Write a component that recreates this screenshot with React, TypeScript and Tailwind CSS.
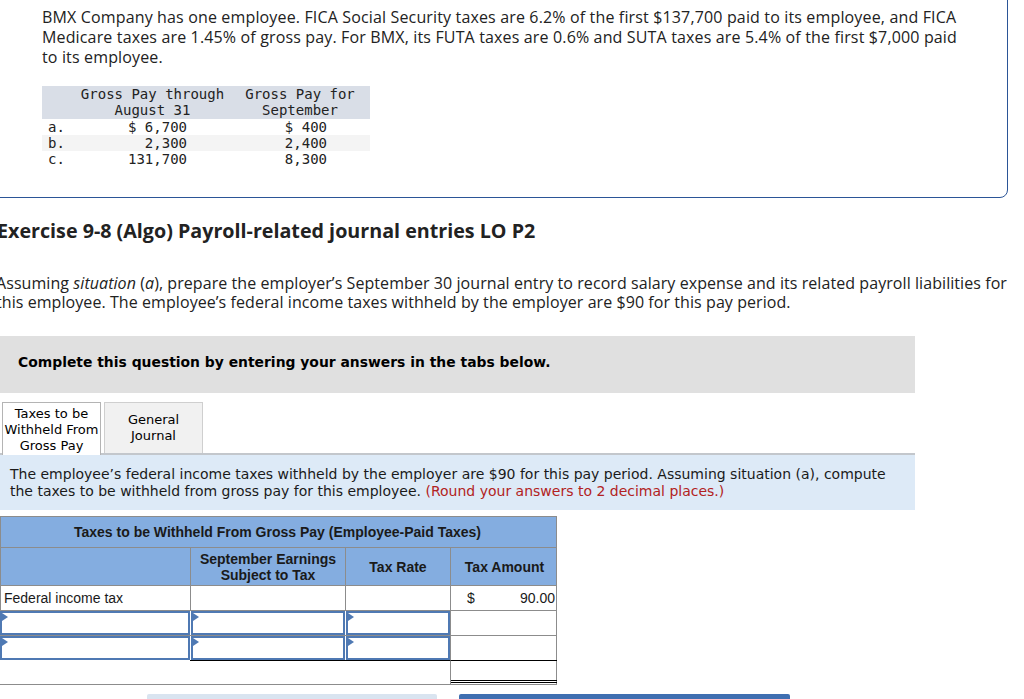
const situations = [
  { label: 'a.', through: '$ 6,700', sept: '$ 400', shaded: false },
  { label: 'b.', through: '2,300', sept: '2,400', shaded: true },
  { label: 'c.', through: '131,700', sept: '8,300', shaded: false },
]

function InputCell({ className = '' }: { className?: string }) {
  return (
    <div className={`relative h-full border-2 border-[#4f79b3] bg-white ${className}`}>
      <div className="absolute left-0 top-0 h-0 w-0 border-y-[4px] border-l-[6px] border-y-transparent border-l-[#4f79b3]" />
    </div>
  )
}

export default function App() {
  return (
    <div className="relative h-[699px] w-[1024px] overflow-hidden bg-white text-[#1a1a1a]">
      {/* question card */}
      <div className="-ml-[10px] -mt-[10px] h-[208px] w-[1018px] rounded-br-[8px] border-[1.5px] border-[#2b5597] pl-[51px] pt-[16px]">
        <p className="font-['Open_Sans',sans-serif] text-[16px] leading-[20px] tracking-[0.15px] text-[#222]">
          <span className="block whitespace-nowrap">
            BMX Company has one employee. FICA Social Security taxes are 6.2% of the first $137,700 paid to its
            employee, and FICA
          </span>
          <span className="block whitespace-nowrap">
            Medicare taxes are 1.45% of gross pay. For BMX, its FUTA taxes are 0.6% and SUTA taxes are 5.4% of the
            first $7,000 paid
          </span>
          <span className="block whitespace-nowrap">to its employee.</span>
        </p>
        <div className="mt-[19px] w-[328px] font-['DejaVu_Sans_Mono',monospace] text-[14px] leading-[16px] text-[#222]">
          <div className="grid grid-cols-[33px_155px_140px] bg-[#d9dee7] pb-[1px]">
            <div />
            <div className="text-center">
              Gross Pay through
              <br />
              August 31
            </div>
            <div className="text-center">
              Gross Pay for
              <br />
              September
            </div>
          </div>
          {situations.map((s) => (
            <div
              key={s.label}
              className={`grid grid-cols-[33px_155px_140px] ${s.shaded ? 'bg-[#f4f4f4]' : ''}`}
            >
              <div className="pl-[6px]">{s.label}</div>
              <div className="pr-[43px] text-right">{s.through}</div>
              <div className="pr-[43px] text-right">{s.sept}</div>
            </div>
          ))}
        </div>
      </div>

      {/* exercise heading */}
      <h1 className="-ml-[3px] mt-[21px] whitespace-nowrap font-['Open_Sans',sans-serif] text-[19.7px] font-bold leading-[24px] text-[#222]">
        Exercise 9-8 (Algo) Payroll-related journal entries LO P2
      </h1>

      <p className="-ml-[4px] mt-[31px] font-['Open_Sans',sans-serif] text-[16px] leading-[19px] tracking-[0.07px] text-[#222]">
        <span className="block whitespace-nowrap">
          Assuming <i>situation</i> (<i>a</i>), prepare the employer’s September 30 journal entry to record salary
          expense and its related payroll liabilities for
        </span>
        <span className="block whitespace-nowrap">
          this employee. The employee’s federal income taxes withheld by the employer are $90 for this pay period.
        </span>
      </p>

      {/* instruction bar */}
      <div className="mt-[24px] flex h-[57px] w-[915px] items-center bg-[#e0e0e0] pl-[18px] pb-[4px] font-['DejaVu_Sans',sans-serif] text-[13.9px] font-bold text-black">
        Complete this question by entering your answers in the tabs below.
      </div>

      {/* tabs */}
      <div className="ml-[2px] mt-[9px] flex items-start gap-[3px] font-['DejaVu_Sans',sans-serif] text-[13px] leading-[16px] text-black">
        <div className="relative z-10 flex h-[53px] w-[99px] flex-col items-center justify-center border border-b-0 border-[#b4b4b4] bg-white pt-[1px]">
          <span>Taxes to be</span>
          <span>Withheld From</span>
          <span>Gross Pay</span>
        </div>
        <div className="flex h-[51px] w-[99px] flex-col items-center justify-center border border-b-0 border-[#cfcfcf] bg-[#f1f1f1]">
          <span>General</span>
          <span>Journal</span>
        </div>
      </div>

      <div className="-mt-[2px] h-[57px] w-[915px] border-t-2 border-[#c3c7cc] bg-[#ddeaf7] pl-[10px] pt-[11px] font-['DejaVu_Sans',sans-serif] text-[14px] leading-[17px] text-[#1a1a1a]">
        <div className="whitespace-nowrap">
          The employee’s federal income taxes withheld by the employer are $90 for this pay period. Assuming
          situation (a), compute
        </div>
        <div className="whitespace-nowrap">
          the taxes to be withheld from gross pay for this employee.{' '}
          <span className="text-[#b22222]">(Round your answers to 2 decimal places.)</span>
        </div>
      </div>

      {/* worksheet table */}
      <div className="mt-[6px] w-[557px] font-['Liberation_Sans',Arial,sans-serif] text-[14px] text-[#1a1a1a]">
        <div className="flex h-[31px] items-center justify-center border-x border-t border-[#8c8c8c] bg-[#84ade0] pr-[2px] font-bold">
          Taxes to be Withheld From Gross Pay (Employee-Paid Taxes)
        </div>
        <div className="grid h-[38px] grid-cols-[190px_155px_105px_107px] border-x border-t border-[#8c8c8c] bg-[#84ade0] font-bold leading-[16px]">
          <div className="border-r border-[#8c8c8c]" />
          <div className="flex items-center justify-center border-r border-[#8c8c8c] text-center">
            September Earnings
            <br />
            Subject to Tax
          </div>
          <div className="flex items-center justify-center border-r border-[#8c8c8c]">Tax Rate</div>
          <div className="flex items-center justify-center">Tax Amount</div>
        </div>
        <div className="grid h-[25px] grid-cols-[190px_155px_105px_107px] border-x border-t border-[#8c8c8c]">
          <div className="flex items-center border-r border-[#8c8c8c] pl-[3px]">Federal income tax</div>
          <div className="border-r border-[#8c8c8c]" />
          <div className="border-r border-[#8c8c8c]" />
          <div className="flex items-center justify-between pl-[16px] pr-[3px]">
            <span>$</span>
            <span>90.00</span>
          </div>
        </div>
        {[0, 1].map((i) => (
          <div key={i} className="grid h-[25px] grid-cols-[190px_155px_105px_107px] border-r border-t border-[#8c8c8c]">
            <InputCell />
            <InputCell className="ml-[1px]" />
            <InputCell className="ml-[1px]" />
            <div className="border-l border-[#8c8c8c]" />
          </div>
        ))}
        <div className="grid h-[25px] grid-cols-[190px_155px_105px_107px] border-b border-r border-[#8c8c8c]">
          <div />
          <div className="border-t border-black" />
          <div className="border-t border-black" />
          <div className="flex flex-col justify-end border-l border-t border-l-[#8c8c8c] border-t-black pb-[1px]">
            <div className="h-[3px] border-y border-black" />
          </div>
        </div>
      </div>

      {/* bottom buttons */}
      <div className="mt-[9px] flex gap-[22px] pl-[147px]">
        <div className="h-[10px] w-[290px] rounded-t-[2px] bg-[#d9e4f0]" />
        <div className="h-[10px] w-[331px] rounded-t-[2px] bg-[#3f6fb1]" />
      </div>
    </div>
  )
}
